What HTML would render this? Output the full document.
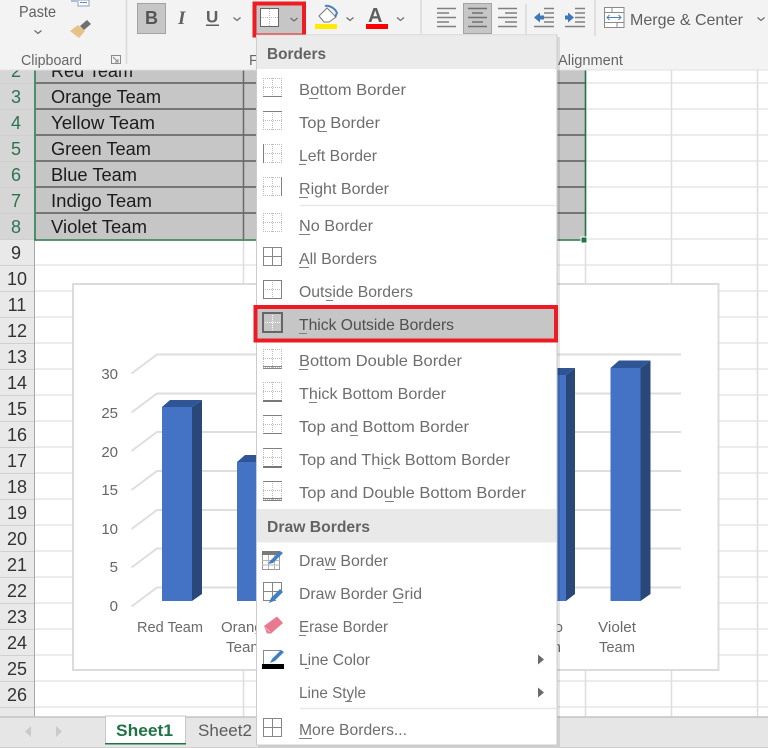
<!DOCTYPE html>
<html><head><meta charset="utf-8"><title>Borders</title>
<style>
html,body{margin:0;padding:0;background:#fff;width:768px;height:748px;overflow:hidden}
svg{display:block;position:absolute;left:0;top:0}
text{font-family:"Liberation Sans",sans-serif}
.m{font-size:16px;fill:#6e6e6e}
.u{fill:#7f7f7f}
.h{font-size:15.5px;font-weight:bold;fill:#636363}
.d{font-size:18px;fill:#1c1c1c}
.n{font-size:18px;text-anchor:middle}
.c{font-size:15px;fill:#6a6a6a}
.r{font-size:15px;fill:#666}
.g{fill:none;stroke:#dedede;stroke-width:2}
.dot{stroke:#bcbcbc;stroke-width:1;stroke-dasharray:1 1;fill:none}
.sol{stroke:#808080;stroke-width:1;fill:none}
.chev{fill:none;stroke:#6a6a6a;stroke-width:1.2}
.al{stroke:#808080;stroke-width:1.4}
</style></head><body>
<svg width="768" height="748" viewBox="0 0 768 748" xmlns="http://www.w3.org/2000/svg">
<defs>
<g id="dg"><path class="dot" d="M0 .5H19M0 9.500H19M0 18.500H19M.5 0V19M9.500 0V19M18.500 0V19"/></g>
<g id="sg"><path d="M.5 .5H18.500V18.500H.5ZM9.500 .5V18.500M.5 9.500H18.500" fill="none" stroke="#868686" stroke-width="1"/></g>
<path id="cv" class="chev" d="M-3.500 -1.500L0 1.500L3.500 -1.500"/>
</defs>

<!-- sheet grid -->
<rect x="0" y="70" width="768" height="650" fill="#fff"/>
<g stroke="#ececec" stroke-width="2">
<path d="M34 83H768M34 109H768M34 135H768M34 161H768M34 187H768M34 213H768M34 239H768M34 265H768M34 291H768M34 317H768M34 343H768M34 369H768M34 395H768M34 421H768M34 447H768M34 473H768M34 499H768M34 525H768M34 551H768M34 577H768M34 603H768M34 629H768M34 655H768M34 681H768M34 707H768"/>
</g>
<g stroke="#dedede" stroke-width="1.500">
<path d="M243.500 70V717M329.500 70V717M415.500 70V717M500 70V717M585.500 70V717M671.500 70V717M757.500 70V717"/>
</g>

<!-- row headers -->
<rect x="0" y="70" width="34" height="647" fill="#e9e9e9"/>
<rect x="0" y="70" width="34" height="170" fill="#d6d6d6"/>
<path d="M0 83.500H34M0 109.500H34M0 135.500H34M0 161.500H34M0 187.500H34M0 213.500H34M0 239.500H34M0 265.500H34M0 291.500H34M0 317.500H34M0 343.500H34M0 369.500H34M0 395.500H34M0 421.500H34M0 447.500H34M0 473.500H34M0 499.500H34M0 525.500H34M0 551.500H34M0 577.500H34M0 603.500H34M0 629.500H34M0 655.500H34M0 681.500H34M0 707.500H34" stroke="#d0d0d0" stroke-width="1"/>
<path d="M34.500 240V717" stroke="#a8a8a8" stroke-width="1"/>
<g fill="#2e7350">
<text class="n" x="16" y="77">2</text>
<text class="n" x="16" y="103">3</text>
<text class="n" x="16" y="129">4</text>
<text class="n" x="16" y="155">5</text>
<text class="n" x="16" y="181">6</text>
<text class="n" x="16" y="207">7</text>
<text class="n" x="16" y="233">8</text>
</g>
<g fill="#333">
<text class="n" x="16" y="259">9</text><text class="n" x="17" y="285">10</text><text class="n" x="17" y="311">11</text><text class="n" x="17" y="337">12</text><text class="n" x="17" y="363">13</text><text class="n" x="17" y="389">14</text><text class="n" x="17" y="415">15</text><text class="n" x="17" y="441">16</text><text class="n" x="17" y="467">17</text><text class="n" x="17" y="493">18</text><text class="n" x="17" y="519">19</text><text class="n" x="17" y="545">20</text><text class="n" x="17" y="571">21</text><text class="n" x="17" y="597">22</text><text class="n" x="17" y="623">23</text><text class="n" x="17" y="649">24</text><text class="n" x="17" y="675">25</text><text class="n" x="17" y="701">26</text>
</g>

<!-- selected range -->
<rect x="36" y="70" width="549" height="169" fill="#c6c6c6"/>
<path d="M36 83H585M36 109H585M36 135H585M36 161H585M36 187H585M36 213H585" stroke="#5c5c5c" stroke-width="1.500"/>
<path d="M243.500 70V239" stroke="#6a6a6a" stroke-width="1.500"/>
<path d="M35 70V240H585.500V70" fill="none" stroke="#217346" stroke-width="1.600"/>
<rect x="581" y="237" width="6" height="6" fill="#217346" stroke="#fff"/>
<text class="d" x="51" y="77" textLength="82" lengthAdjust="spacingAndGlyphs">Red Team</text>
<text class="d" x="51" y="103" textLength="110" lengthAdjust="spacingAndGlyphs">Orange Team</text>
<text class="d" x="51" y="129" textLength="104" lengthAdjust="spacingAndGlyphs">Yellow Team</text>
<text class="d" x="51" y="155" textLength="100" lengthAdjust="spacingAndGlyphs">Green Team</text>
<text class="d" x="51" y="181" textLength="86" lengthAdjust="spacingAndGlyphs">Blue Team</text>
<text class="d" x="51" y="207" textLength="101" lengthAdjust="spacingAndGlyphs">Indigo Team</text>
<text class="d" x="51" y="233" textLength="96" lengthAdjust="spacingAndGlyphs">Violet Team</text>

<!-- chart -->
<rect x="73" y="284" width="645.500" height="386" fill="#fff" stroke="#dcdcdc" stroke-width="2"/>
<g class="g">
<path d="M131.500 373.500L157 354.500H681"/>
<path d="M131.500 412.500L157 393.500H681"/>
<path d="M131.500 451L157 432H681"/>
<path d="M131.500 490L157 471H681"/>
<path d="M131.500 529L157 510H681"/>
<path d="M131.500 567.500L157 548.500H681"/>
<path d="M131.500 606.500L157 587.500H681"/>
</g>
<g text-anchor="end">
<text class="r" x="118" y="379">30</text><text class="r" x="118" y="418">25</text><text class="r" x="118" y="457">20</text><text class="r" x="118" y="495">15</text><text class="r" x="118" y="534">10</text><text class="r" x="118" y="572">5</text><text class="r" x="118" y="611">0</text>
</g>
<g>
<polygon points="162,407 170,400 202,400 192,407" fill="#2f5597"/><polygon points="192,407 202,400 202,594 192,601" fill="#294879"/><rect x="162" y="407" width="30" height="194" fill="#4472c4"/>
<polygon points="237,462 245,455 278,455 267,462" fill="#2f5597"/><rect x="237" y="462" width="30" height="139" fill="#4472c4"/>
<polygon points="536,375 544,368 575,368 566,375" fill="#2f5597"/><polygon points="566,375 575,368 575,594 566,601" fill="#294879"/><rect x="536" y="375" width="30" height="226" fill="#4472c4"/>
<polygon points="610.500,368 619,360.500 650.500,360.500 640.500,368" fill="#2f5597"/><polygon points="640.500,368 650.500,360.500 650.500,594 640.500,601" fill="#294879"/><rect x="610.500" y="368" width="30" height="233" fill="#4472c4"/>
</g>
<text class="c" x="137" y="632" textLength="66" lengthAdjust="spacingAndGlyphs">Red Team</text>
<text class="c" x="221" y="632" textLength="50" lengthAdjust="spacingAndGlyphs">Orange</text>
<text class="c" x="226" y="652" textLength="37" lengthAdjust="spacingAndGlyphs">Team</text>
<text class="c" x="520" y="632" textLength="43" lengthAdjust="spacingAndGlyphs">Indigo</text>
<text class="c" x="524" y="652" textLength="37" lengthAdjust="spacingAndGlyphs">Team</text>
<text class="c" x="598" y="632" textLength="38" lengthAdjust="spacingAndGlyphs">Violet</text>
<text class="c" x="599" y="652" textLength="36" lengthAdjust="spacingAndGlyphs">Team</text>

<!-- sheet tabs -->
<rect x="0" y="717" width="768" height="31" fill="#e6e6e6"/>
<path d="M0 717H768" stroke="#c4c4c4" stroke-width="1.500"/>
<path d="M0 747.500H768" stroke="#cfcfcf"/>
<path d="M31 726V737L25 731.500Z" fill="#cacaca"/>
<path d="M56 726V737L62 731.500Z" fill="#cacaca"/>
<rect x="105.500" y="716" width="80" height="28" fill="#fff" stroke="#c8c8c8" stroke-width="1"/>
<rect x="105" y="743" width="81" height="1.500" fill="#217346"/>
<text x="116" y="736" font-size="17" font-weight="bold" fill="#217346" textLength="57" lengthAdjust="spacingAndGlyphs">Sheet1</text>
<text x="198" y="736" font-size="17" fill="#5c5c5c" textLength="54" lengthAdjust="spacingAndGlyphs">Sheet2</text>

<!-- ribbon -->
<rect x="0" y="0" width="768" height="70" fill="#f3f3f3"/>
<path d="M0 70H768" stroke="#e0e0e0" stroke-width="1"/>
<path d="M126.500 0V64M421 0V34M526 4V34M595 0V36" stroke="#dadada" stroke-width="1.500"/>
<text x="19" y="17" font-size="16" fill="#5f5f5f" textLength="37" lengthAdjust="spacingAndGlyphs">Paste</text>
<use href="#cv" x="38" y="32"/>
<rect x="78" y="0" width="11" height="6" fill="#fff" stroke="#8e9fb3"/>
<path d="M71 1H77M80 2.500H87" stroke="#5b8bc0"/>
<path d="M70 31L78 25L85 31L79 38Z" fill="#e8c187"/>
<path d="M80 26L87 20L91 24L84 30Z" fill="#707070"/>
<text x="21" y="65" font-size="14.500" fill="#666" textLength="61" lengthAdjust="spacingAndGlyphs">Clipboard</text>
<path d="M111.500 55.500H120.500V63.500H111.500ZM113 57L118 62M118 59V62H115" fill="none" stroke="#8a8a8a"/>
<text x="249" y="65" font-size="14.500" fill="#666">F</text>
<text x="558" y="65" font-size="14.500" fill="#666" textLength="65" lengthAdjust="spacingAndGlyphs">Alignment</text>

<!-- font buttons -->
<rect x="137.500" y="3.500" width="28" height="30" fill="#c6c6c6" stroke="#a3a3a3"/>
<text x="145" y="24" font-size="18" font-weight="bold" fill="#555">B</text>
<text x="178" y="24" font-size="19" font-style="italic" font-weight="bold" fill="#606060" style="font-family:'Liberation Serif',serif">I</text>
<text x="206" y="22.500" font-size="17" fill="#606060" font-weight="bold">U</text>
<rect x="206" y="24.500" width="13" height="1.500" fill="#606060"/>
<use href="#cv" x="237" y="19"/>

<!-- borders button -->
<rect x="255" y="4" width="48" height="30" fill="#c6c6c6"/>
<rect x="260.500" y="8.500" width="18" height="18" fill="#fff" stroke="#666" stroke-width="1"/>
<path class="dot" d="M269.500 9V26M261 17.500H278"/>
<use href="#cv" x="294" y="19.500"/>
<rect x="254.500" y="3.500" width="49.500" height="32" fill="none" stroke="#ed1c24" stroke-width="4"/>

<!-- fill color -->
<path d="M319 16L327 8L336 17L329 22H324Z" fill="#fff" stroke="#7a7a7a"/>
<path d="M325 6C329 5 335 8 337 13L335 17" fill="none" stroke="#4b82bd" stroke-width="2"/>
<rect x="315" y="24" width="22" height="5" fill="#ffeb00"/>
<use href="#cv" x="350" y="19"/>
<text x="368" y="22" font-size="20" font-weight="bold" fill="#5f5f5f">A</text>
<rect x="366" y="24" width="22" height="5" fill="#f00"/>
<use href="#cv" x="400.500" y="19"/>

<!-- align -->
<rect x="463.500" y="3.500" width="28" height="30" fill="#c6c6c6" stroke="#a3a3a3"/>
<g class="al">
<path d="M437 8.500H456M437 13H449M437 17.500H456M437 22H449M437 26.500H456"/>
<path d="M468 8.500H487M472 13H483M468 17.500H487M472 22H483M468 26.500H487" stroke="#707070"/>
<path d="M498 8.500H517M505 13H517M498 17.500H517M505 22H517M498 26.500H517"/>
<path d="M544 8.500H554M544 13H554M544 17.500H554M544 22H554M534 26.500H554"/>
<path d="M575 8.500H585M575 13H585M575 17.500H585M575 22H585M565 26.500H585"/>
</g>
<path d="M534 17.500L540 12.500V15.500H544V19.500H540V22.500Z" fill="#3f78b8"/>
<path d="M574 17.500L568 12.500V15.500H565V19.500H568V22.500Z" fill="#3f78b8"/>
<rect x="604.500" y="7.500" width="19.500" height="20" fill="#fff" stroke="#8a8a8a"/>
<path d="M604.500 12.500H624M604.500 22.500H624M612 7.500V12.500M617 22.500V27.500" stroke="#8a8a8a" fill="none"/>
<path d="M607 17.500H621M609.500 15L607 17.500L609.500 20M618.500 15L621 17.500L618.500 20" stroke="#4b82bd" fill="none"/>
<text x="630" y="25" font-size="16" fill="#5f5f5f" textLength="113" lengthAdjust="spacingAndGlyphs">Merge &amp; Center</text>
<use href="#cv" x="761" y="19"/>

<!-- dropdown menu -->
<rect x="258" y="37" width="302" height="710" fill="#000" opacity=".1"/>
<rect x="256.500" y="35" width="300.500" height="710" fill="#fff" stroke="#cccccc" stroke-width="1"/>
<rect x="257" y="36" width="299.500" height="33" fill="#ebebeb"/>
<rect x="257" y="509" width="299.500" height="33.500" fill="#e9e9e9"/>
<text class="h" x="267" y="59" textLength="59" lengthAdjust="spacingAndGlyphs">Borders</text>
<text class="h" x="267" y="532" textLength="103" lengthAdjust="spacingAndGlyphs">Draw Borders</text>
<path d="M300 205.500H556M300 708.500H556" stroke="#e8e8e8" stroke-width="1.500"/>

<!-- highlight -->
<rect x="256" y="307" width="300" height="33" fill="#c6c6c6"/>
<rect x="255.500" y="307" width="300.500" height="33.500" fill="none" stroke="#ed1c24" stroke-width="4"/>

<text class="m" x="299" y="95" textLength="107" lengthAdjust="spacingAndGlyphs">Bottom Border</text>
<text class="m" x="299" y="128" textLength="81" lengthAdjust="spacingAndGlyphs">Top Border</text>
<text class="m" x="299" y="161" textLength="78" lengthAdjust="spacingAndGlyphs">Left Border</text>
<text class="m" x="299" y="194" textLength="90" lengthAdjust="spacingAndGlyphs">Right Border</text>
<text class="m" x="299" y="231" textLength="74" lengthAdjust="spacingAndGlyphs">No Border</text>
<text class="m" x="299" y="264" textLength="78" lengthAdjust="spacingAndGlyphs">All Borders</text>
<text class="m" x="299" y="297" textLength="114" lengthAdjust="spacingAndGlyphs">Outside Borders</text>
<text class="m" x="299" y="330" textLength="155" lengthAdjust="spacingAndGlyphs" style="fill:#4f4f4f">Thick Outside Borders</text>
<text class="m" x="299" y="366" textLength="163" lengthAdjust="spacingAndGlyphs">Bottom Double Border</text>
<text class="m" x="299" y="399" textLength="147" lengthAdjust="spacingAndGlyphs">Thick Bottom Border</text>
<text class="m" x="299" y="432" textLength="170" lengthAdjust="spacingAndGlyphs">Top and Bottom Border</text>
<text class="m" x="299" y="465" textLength="211" lengthAdjust="spacingAndGlyphs">Top and Thick Bottom Border</text>
<text class="m" x="299" y="498" textLength="227" lengthAdjust="spacingAndGlyphs">Top and Double Bottom Border</text>
<text class="m" x="299" y="566" textLength="89" lengthAdjust="spacingAndGlyphs">Draw Border</text>
<text class="m" x="299" y="599" textLength="123" lengthAdjust="spacingAndGlyphs">Draw Border Grid</text>
<text class="m" x="299" y="632" textLength="89" lengthAdjust="spacingAndGlyphs">Erase Border</text>
<text class="m" x="299" y="665" textLength="71" lengthAdjust="spacingAndGlyphs">Line Color</text>
<text class="m" x="299" y="698" textLength="67" lengthAdjust="spacingAndGlyphs">Line Style</text>
<text class="m" x="299" y="735" textLength="108" lengthAdjust="spacingAndGlyphs">More Borders...</text>
<g class="u">
<rect x="309" y="98" width="9" height="1"/><rect x="318" y="131" width="9" height="1"/><rect x="299" y="164" width="7" height="1"/><rect x="299" y="197" width="9" height="1"/><rect x="299" y="234" width="11" height="1"/><rect x="299" y="267" width="10" height="1"/><rect x="326" y="300" width="7" height="1"/><rect x="299" y="333" width="8" height="1"/><rect x="299" y="369" width="9" height="1"/><rect x="309" y="402" width="8" height="1"/><rect x="350" y="435" width="8" height="1"/><rect x="383" y="468" width="7" height="1"/><rect x="385" y="501" width="9" height="1"/><rect x="325" y="569" width="11" height="1"/><rect x="393" y="602" width="10" height="1"/><rect x="299" y="635" width="7" height="1"/><rect x="305" y="668" width="4" height="1"/><rect x="345" y="701" width="7" height="1"/><rect x="299" y="738" width="13" height="1"/>
</g>

<!-- menu icons -->
<g transform="translate(263,78)"><use href="#dg"/><path class="sol" d="M0 18.500H19"/></g>
<g transform="translate(263,111)"><use href="#dg"/><path class="sol" d="M0 .5H19"/></g>
<g transform="translate(263,144)"><use href="#dg"/><path class="sol" d="M.5 0V19"/></g>
<g transform="translate(263,177)"><use href="#dg"/><path class="sol" d="M18.500 0V19"/></g>
<g transform="translate(263,213)"><use href="#dg"/></g>
<g transform="translate(263,247)"><use href="#sg"/></g>
<g transform="translate(263,280)"><path class="dot" d="M9.500 0V19M0 9.500H19"/><rect x=".5" y=".5" width="18" height="18" class="sol"/></g>
<g transform="translate(263,313)"><path d="M9.500 0V19M0 9.500H19" stroke="#fff" stroke-width="1" stroke-dasharray="1 1" fill="none"/><rect x="0" y="0" width="19" height="19" fill="none" stroke="#666" stroke-width="2"/></g>
<g transform="translate(263,349)"><use href="#dg"/><path d="M0 17.500H19M0 19.500H19" stroke="#888" stroke-width="1" fill="none"/></g>
<g transform="translate(263,382)"><use href="#dg"/><path d="M0 19H19" stroke="#777" stroke-width="2"/></g>
<g transform="translate(263,415)"><use href="#dg"/><path class="sol" d="M0 .5H19M0 18.500H19"/></g>
<g transform="translate(263,448)"><use href="#dg"/><path class="sol" d="M0 .5H19"/><path d="M0 19H19" stroke="#777" stroke-width="2"/></g>
<g transform="translate(263,481)"><use href="#dg"/><path class="sol" d="M0 .5H19M0 17.500H19M0 19.500H19"/></g>

<!-- draw border -->
<g transform="translate(262,551)">
<rect x=".5" y=".5" width="17" height="18" fill="#fff" stroke="#9a9a9a"/><rect x="0" y="0" width="18" height="4" fill="#7a7a7a"/>
<path d="M6.500 4V18M12.500 4V18M0 9.500H18M0 14H18" stroke="#b5b5b5"/>
<path d="M6 13L8 10L18 0L21 2L11 12Z" fill="#3f7fc4"/></g>
<g transform="translate(263,582)"><path d="M13 18.500H.5V.5H18.500V11M9.500 .5V15M.5 9.500H15" fill="none" stroke="#868686"/><path d="M6 21L8 16L17 7L20 10L11 19Z" fill="#3f7fc4"/></g>
<path d="M264 626L277 616.500L283 623L271 633.500L267 633.500Z" fill="#e8798f"/>
<path d="M264 626.500L270 632" stroke="#f3b5c0" stroke-width="1"/>
<g transform="translate(263,650)">
<path d="M.5 16V.5H18" fill="none" stroke="#8a8a8a"/>
<path d="M7 13L9 9L18 0L21 2L12 11Z" fill="#3f7fc4"/>
<rect x="-1" y="14" width="22" height="5" fill="#000"/></g>
<path d="M538 654.500L544 659.500L538 664.500Z" fill="#6a6a6a"/>
<path d="M538 687.500L544 692.500L538 697.500Z" fill="#6a6a6a"/>
<g transform="translate(263,718)"><use href="#sg"/></g>
</svg>
</body></html>
